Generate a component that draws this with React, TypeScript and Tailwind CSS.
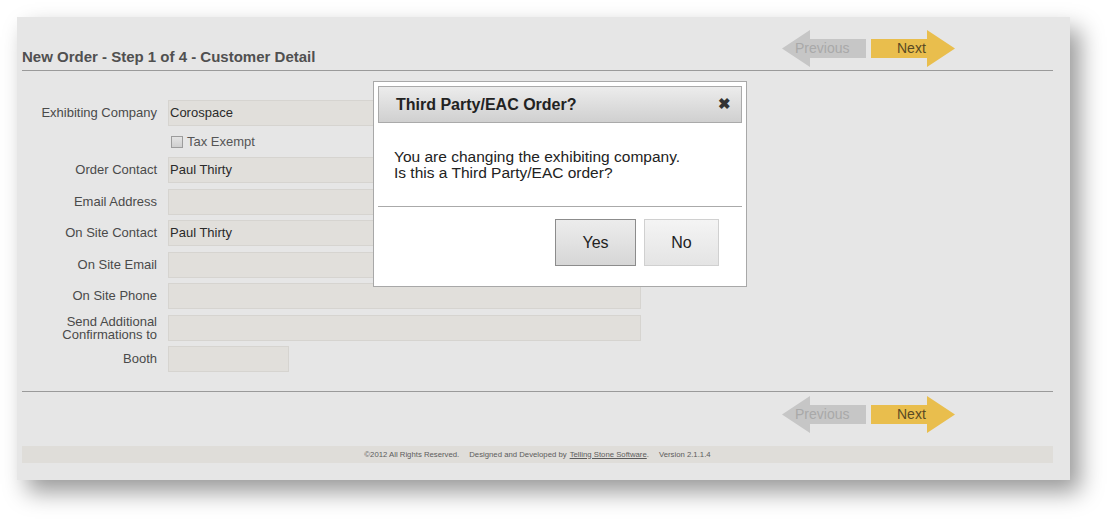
import { ReactNode } from "react";

function ArrowButton({ dir, label }: { dir: "prev" | "next"; label: string }) {
  const prev = dir === "prev";
  return (
    <div className="relative h-[37px] w-[84px]">
      <svg className="absolute inset-0" width="84" height="37" viewBox="0 0 84 37">
        {prev ? (
          <polygon points="0,18.5 28,0 28,9 84,9 84,28 28,28 28,37" fill="#c6c6c6" />
        ) : (
          <polygon points="0,9 56,9 56,0 84,18.5 56,37 56,28 0,28" fill="#e9be4d" />
        )}
      </svg>
      <span
        className={
          prev
            ? "absolute left-[13px] top-[10px] text-[14px] leading-[17px] text-[#a9a9a9]"
            : "absolute left-[26px] top-[10px] text-[14px] leading-[17px] text-[#5a4a24]"
        }
      >
        {label}
      </span>
    </div>
  );
}

function Nav() {
  return (
    <div className="flex gap-[5px]">
      <ArrowButton dir="prev" label="Previous" />
      <ArrowButton dir="next" label="Next" />
    </div>
  );
}

function Field({ label, value, narrow, twoLine }: { label: ReactNode; value?: string; narrow?: boolean; twoLine?: boolean }) {
  return (
    <>
      <div
        className={
          twoLine
            ? "flex h-[26px] flex-col items-end justify-center text-right text-[13px] leading-[13px] text-[#4a4a4a]"
            : "flex h-[26px] items-center justify-end text-[13px] text-[#4a4a4a]"
        }
      >
        {label}
      </div>
      <div
        className={
          (narrow ? "w-[121px] " : "w-[473px] ") +
          "flex h-[26px] items-center border border-[#d6d4d0] bg-[#e1dfdb] px-[1px] text-[13px] text-[#2a2a2a]"
        }
      >
        {value}
      </div>
    </>
  );
}

export default function App() {
  return (
    <div className="relative h-[528px] w-[1118px] overflow-hidden bg-white font-['Liberation_Sans',Arial,sans-serif]">
      <div className="relative ml-[17px] mt-[17px] h-[463px] w-[1053px] bg-[#e6e6e6] shadow-[10px_12px_22px_rgba(0,0,0,0.4)]">
        <div className="ml-[5px] w-[1031px]">
          <div className="flex h-[54px] items-end border-b border-[#9a9a9a]">
            <h1 className="pb-[5px] text-[15px] font-bold leading-[17px] text-[#505050]">
              New Order - Step 1 of 4 - Customer Detail
            </h1>
            <div className="mb-[3px] ml-auto mr-[98px]">
              <Nav />
            </div>
          </div>

          <div className="grid grid-cols-[135px_1fr] gap-x-[11px] gap-y-[5.5px] pt-[29px]">
            <Field label="Exhibiting Company" value="Corospace" />
            <div />
            <div className="flex h-[20px] items-center gap-[4px] pl-[3px] text-[13px] text-[#555]">
              <span className="h-[12px] w-[12px] border border-[#9c9c9c] bg-gradient-to-b from-[#e4e4e4] to-[#cfcfcf]" />
              Tax Exempt
            </div>
            <Field label="Order Contact" value="Paul Thirty" />
            <Field label="Email Address" />
            <Field label="On Site Contact" value="Paul Thirty" />
            <Field label="On Site Email" />
            <Field label="On Site Phone" />
            <Field
              twoLine
              label={
                <>
                  <span>Send Additional</span>
                  <span>Confirmations to</span>
                </>
              }
            />
            <Field label="Booth" narrow />
          </div>

          <div className="mt-[19px] border-t border-[#9a9a9a] pt-[4px]">
            <div className="ml-[760px]">
              <Nav />
            </div>
          </div>

          <div className="mt-[13px] flex h-[17px] items-center justify-center bg-[#dfddd9] text-[7.75px] text-[#5c5c5c]">
            <span>©2012 All Rights Reserved.</span>
            <span className="ml-[10px]">Designed and Developed by</span>
            <span className="ml-[3px] underline">Telling Stone Software</span>
            <span>.</span>
            <span className="ml-[10px]">Version 2.1.1.4</span>
          </div>
        </div>

        <div className="absolute left-[356px] top-[64px] h-[206px] w-[374px] border border-[#a8a8a8] bg-white p-[4px]">
          <div className="flex h-[37px] items-center justify-between border border-[#aaaaaa] bg-gradient-to-b from-[#ececec] to-[#d0d0d0] pl-[17px] pr-[10px]">
            <span className="text-[16px] font-bold text-[#222]">Third Party/EAC Order?</span>
            <span className="text-[15px] font-bold text-[#333]">✖</span>
          </div>
          <div className="px-[16px] pt-[26px] text-[15.5px] leading-[16px] text-[#222]">
            <p>You are changing the exhibiting company.</p>
            <p>Is this a Third Party/EAC order?</p>
          </div>
          <div className="mt-[25px] border-t border-[#aaaaaa]" />
          <div className="mt-[12px] flex justify-end gap-[8px] pr-[23px]">
            <button className="h-[47px] w-[81px] border border-[#8c8c8c] bg-gradient-to-b from-[#ececec] via-[#e2e2e2] to-[#d6d6d6] text-[16px] text-[#222]">
              Yes
            </button>
            <button className="h-[47px] w-[75px] border border-[#d0d0d0] bg-gradient-to-b from-[#f4f4f4] via-[#ececec] to-[#e4e4e4] text-[16px] text-[#222]">
              No
            </button>
          </div>
        </div>
      </div>
    </div>
  );
}
